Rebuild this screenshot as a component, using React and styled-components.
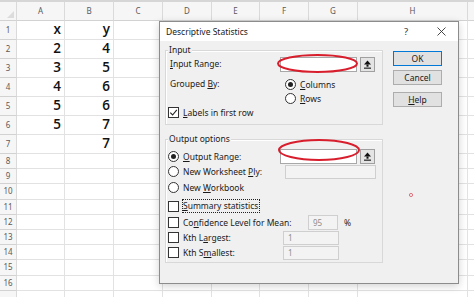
import React from 'react';
import styled, { createGlobalStyle } from 'styled-components';

const GlobalStyle = createGlobalStyle`
  html, body {
    margin: 0;
    padding: 0;
    background: #fff;
    overflow: hidden;
  }
`;

const UI_FONT = `'Noto Sans', 'DejaVu Sans', sans-serif`;

const Page = styled.div`
  position: relative;
  width: 474px;
  height: 297px;
  overflow: hidden;
  background: #fff;
  font-family: ${UI_FONT};
`;

const TopStrip = styled.div`
  height: 2px;
  background: #d6d6d6;
`;

/* ---------- spreadsheet ---------- */

const Sheet = styled.div`
  display: grid;
  grid-template-columns: 17px 48px 49px 49px 49px 48px 49px 49px 110px 60px;
  grid-template-rows: 19px repeat(7, 19px) repeat(10, 15.2px);
`;

const Cell = styled.div`
  border-right: 1px solid #e2e2e2;
  border-bottom: 1px solid #e2e2e2;
  box-sizing: border-box;
  display: flex;
  align-items: center;
  justify-content: flex-end;
  padding-right: 3px;
  font-family: 'Open Sans', ${UI_FONT};
  font-size: 13.5px;
  font-weight: 600;
  color: #111;
  line-height: 1;
`;

const HeadCell = styled.div`
  position: relative;
  background: #f6f6f6;
  border-right: 1px solid #dadada;
  border-bottom: 1px solid #d2d2d2;
  box-sizing: border-box;
  display: flex;
  align-items: center;
  justify-content: center;
  font-size: 8px;
  color: #5a5a5a;
  line-height: 1;

  ${({ $corner }) =>
    $corner &&
    `
    &::after {
      content: '';
      position: absolute;
      right: 2px;
      bottom: 2px;
      border-left: 7px solid transparent;
      border-bottom: 7px solid #dcdcdc;
    }
  `}
`;

const columns = ['A', 'B', 'C', 'D', 'E', 'F', 'G', 'H', ''];
const values = {
  A: ['x', '2', '3', '4', '5', '5', ''],
  B: ['y', '4', '5', '6', '6', '7', '7'],
};

// the last row only peeks in at the bottom edge, its number is off-screen
const Spreadsheet = () => {
  const rows = Array.from({ length: 17 }, (_, i) => i + 1);
  return (
    <Sheet>
      <HeadCell $corner />
      {columns.map((c, i) => (
        <HeadCell key={`h${i}`}>{c}</HeadCell>
      ))}
      {rows.map((r) => (
        <React.Fragment key={r}>
          <HeadCell>{r < 17 ? r : ''}</HeadCell>
          {columns.map((c, i) => (
            <Cell key={`${r}-${i}`}>{(values[c] && values[c][r - 1]) || ''}</Cell>
          ))}
        </React.Fragment>
      ))}
    </Sheet>
  );
};

/* ---------- dialog ---------- */

const Dialog = styled.div`
  position: absolute;
  left: 159px;
  top: 21px;
  width: 300px;
  height: 263px;
  box-sizing: border-box;
  border: 1px solid #8c8c8c;
  background: #f0f0f0;
  box-shadow: 0 2px 8px rgba(0, 0, 0, 0.18);
  font-family: ${UI_FONT};
  font-size: 8.5px;
  color: #1a1a1a;
  display: flex;
  flex-direction: column;
`;

const TitleBar = styled.div`
  height: 19px;
  background: #fff;
  display: flex;
  align-items: center;
  justify-content: space-between;
  padding: 0 12px 0 6px;
`;

const Title = styled.span`
  font-size: 8.5px;
  color: #1a1a1a;
`;

const TitleButtons = styled.div`
  display: flex;
  align-items: center;
  gap: 29px;
`;

const HelpGlyph = styled.span`
  font-size: 9.5px;
  color: #333;
`;

const Body = styled.div`
  flex: 1;
  display: flex;
  padding: 9px 0 0 5px;
`;

const Groups = styled.div`
  display: flex;
  flex-direction: column;
  gap: 14px;
  width: 218px;
`;

const GroupBox = styled.div`
  position: relative;
  height: ${({ $h }) => $h}px;
  box-sizing: border-box;
  border: 1px solid #d8d8d8;
  box-shadow: inset 1px 1px 0 #fff;
  padding: ${({ $pt }) => $pt}px 0 0 2px;
  display: flex;
  flex-direction: column;
`;

const Legend = styled.span`
  position: absolute;
  left: 2px;
  top: -7px;
  padding: 0 1px;
  background: #f0f0f0;
  line-height: 12px;
`;

const Row = styled.div`
  display: flex;
  align-items: ${({ $align }) => $align || 'center'};
  height: ${({ $h }) => $h}px;
  margin-top: ${({ $mt }) => $mt || 0}px;
`;

const FieldLabel = styled.span`
  width: ${({ $w }) => $w}px;
  padding-left: ${({ $pl }) => $pl || 0}px;
  box-sizing: border-box;
  flex-shrink: 0;
  line-height: 14px;
  white-space: nowrap;
`;

const TextBox = styled.div`
  width: ${({ $w }) => $w}px;
  height: ${({ $h }) => $h || 15}px;
  box-sizing: border-box;
  border: 1px solid ${({ $disabled }) => ($disabled ? '#cfcfcf' : '#a8a8a8')};
  background: ${({ $disabled }) => ($disabled ? '#f3f3f3' : '#fff')};
  color: #8d8d8d;
  display: flex;
  align-items: center;
  padding-left: 4px;
  font-size: 8px;
`;

const PickButton = styled.div`
  width: 15px;
  height: 15px;
  margin-left: 3px;
  box-sizing: border-box;
  border: 1px solid #a0a0a0;
  background: #e4e4e4;
  display: flex;
  align-items: center;
  justify-content: center;
`;

const Option = styled.span`
  display: flex;
  align-items: center;
  gap: 4px;
  flex-shrink: 0;
  width: ${({ $w }) => ($w ? `${$w}px` : 'auto')};
  white-space: nowrap;
`;

const RadioDot = styled.span`
  width: 11px;
  height: 11px;
  box-sizing: border-box;
  border-radius: 50%;
  border: 1px solid #333;
  background: #fff;
  display: flex;
  align-items: center;
  justify-content: center;

  &::after {
    content: '';
    width: 5px;
    height: 5px;
    border-radius: 50%;
    background: ${({ $on }) => ($on ? '#222' : 'transparent')};
  }
`;

const CheckSquare = styled.span`
  width: 11px;
  height: 11px;
  box-sizing: border-box;
  border: 1px solid #333;
  background: #fff;
  display: flex;
  align-items: center;
  justify-content: center;
`;

const FocusText = styled.span`
  outline: 1px dotted #222;
  outline-offset: 0;
  padding: 0 1px 0 0;
  line-height: 12px;
`;

const RadioStack = styled.div`
  display: flex;
  flex-direction: column;
`;

const StackLine = styled.div`
  height: 14px;
  display: flex;
  align-items: center;
`;

const Percent = styled.span`
  margin-left: 6px;
`;

const Buttons = styled.div`
  display: flex;
  flex-direction: column;
  margin: 1px 0 0 10px;
`;

const PushButton = styled.div`
  width: 49px;
  height: 15px;
  box-sizing: border-box;
  border: 1px solid ${({ $default }) => ($default ? '#0078d7' : '#adadad')};
  background: #e1e1e1;
  display: flex;
  align-items: center;
  justify-content: center;
  margin-top: ${({ $mt }) => $mt || 0}px;
  font-size: 8.5px;
`;

/* ---------- annotation marks ---------- */

const MarkLayer = styled.svg`
  position: absolute;
  left: 0;
  top: 0;
  width: 474px;
  height: 297px;
  pointer-events: none;
`;

const UpArrow = () => (
  <svg width="9" height="9" viewBox="0 0 9 9">
    <polygon points="4.5,0.5 1,4.5 8,4.5" fill="#111" />
    <rect x="3.5" y="4.5" width="2" height="2.2" fill="#111" />
    <rect x="1" y="7.6" width="7" height="1.1" fill="#111" />
  </svg>
);

const CloseIcon = () => (
  <svg width="9" height="9" viewBox="0 0 9 9">
    <path d="M0.5 0.5 L8.5 8.5 M8.5 0.5 L0.5 8.5" stroke="#333" strokeWidth="0.9" fill="none" />
  </svg>
);

const Tick = () => (
  <svg width="9" height="9" viewBox="0 0 9 9">
    <path d="M1.3 4.6 L3.6 7 L7.8 1.8" stroke="#222" strokeWidth="1.1" fill="none" />
  </svg>
);

const Radio = ({ on, children, w }) => (
  <Option $w={w}>
    <RadioDot $on={on} />
    <span>{children}</span>
  </Option>
);

const Check = ({ on, children, w }) => (
  <Option $w={w}>
    <CheckSquare>{on && <Tick />}</CheckSquare>
    {children}
  </Option>
);

const DescriptiveStatistics = () => (
  <Dialog>
    <TitleBar>
      <Title>Descriptive Statistics</Title>
      <TitleButtons>
        <HelpGlyph>?</HelpGlyph>
        <CloseIcon />
      </TitleButtons>
    </TitleBar>
    <Body>
      <Groups>
        <GroupBox $h={75} $pt={5}>
          <Legend>Input</Legend>
          <Row $h={16}>
            <FieldLabel $w={112} $pl={2}>
              <u>I</u>nput Range:
            </FieldLabel>
            <TextBox $w={77} />
            <PickButton>
              <UpArrow />
            </PickButton>
          </Row>
          <Row $h={28} $mt={5} $align="flex-start">
            <FieldLabel $w={117} $pl={2}>
              Grouped <u>B</u>y:
            </FieldLabel>
            <RadioStack>
              <StackLine>
                <Radio on>
                  <u>C</u>olumns
                </Radio>
              </StackLine>
              <StackLine>
                <Radio>
                  <u>R</u>ows
                </Radio>
              </StackLine>
            </RadioStack>
          </Row>
          <Row $h={14}>
            <Check on>
              <span>
                <u>L</u>abels in first row
              </span>
            </Check>
          </Row>
        </GroupBox>

        <GroupBox $h={124} $pt={8}>
          <Legend>Output options</Legend>
          <Row $h={16}>
            <Radio on w={112}>
              <u>O</u>utput Range:
            </Radio>
            <TextBox $w={77} />
            <PickButton>
              <UpArrow />
            </PickButton>
          </Row>
          <Row $h={15}>
            <Radio w={117}>
              New Worksheet <u>P</u>ly:
            </Radio>
            <TextBox $w={91} $h={14} $disabled />
          </Row>
          <Row $h={16}>
            <Radio>
              New <u>W</u>orkbook
            </Radio>
          </Row>
          <Row $h={14} $mt={4}>
            <Check>
              <FocusText>
                <u>S</u>ummary statistics
              </FocusText>
            </Check>
          </Row>
          <Row $h={16} $mt={1}>
            <Check w={140}>
              <span>
                Co<u>n</u>fidence Level for Mean:
              </span>
            </Check>
            <TextBox $w={30} $disabled>
              95
            </TextBox>
            <Percent>%</Percent>
          </Row>
          <Row $h={15}>
            <Check w={115}>
              <span>
                Kth L<u>a</u>rgest:
              </span>
            </Check>
            <TextBox $w={56} $h={14} $disabled>
              1
            </TextBox>
          </Row>
          <Row $h={15}>
            <Check w={115}>
              <span>
                Kth S<u>m</u>allest:
              </span>
            </Check>
            <TextBox $w={56} $h={14} $disabled>
              1
            </TextBox>
          </Row>
        </GroupBox>
      </Groups>

      <Buttons>
        <PushButton $default>OK</PushButton>
        <PushButton $mt={4}>Cancel</PushButton>
        <PushButton $mt={7}>
          <span>
            <u>H</u>elp
          </span>
        </PushButton>
      </Buttons>
    </Body>
  </Dialog>
);

const App = () => (
  <>
    <GlobalStyle />
    <Page>
      <TopStrip />
      <Spreadsheet />
      <DescriptiveStatistics />
      <MarkLayer viewBox="0 0 474 297">
        <ellipse cx="317.5" cy="63.5" rx="39.5" ry="8.5" fill="none" stroke="#d81e2c" strokeWidth="2" />
        <ellipse cx="319" cy="150" rx="40" ry="10" fill="none" stroke="#d81e2c" strokeWidth="2" />
        <circle cx="411" cy="195" r="1.6" fill="none" stroke="#e0707e" strokeWidth="1" />
      </MarkLayer>
    </Page>
  </>
);

export default App;
